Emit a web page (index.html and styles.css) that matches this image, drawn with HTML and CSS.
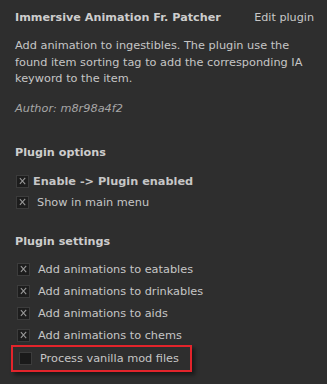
FILE: index.html
```html
<!DOCTYPE html>
<html>
<head>
<meta charset="utf-8">
<link rel="stylesheet" href="styles.css">
</head>
<body>
<div class="panel">
  <div class="header">
    <span class="title">Immersive Animation Fr. Patcher</span>
    <span class="edit">Edit plugin</span>
  </div>
  <p class="desc">Add animation to ingestibles. The plugin use the found item sorting tag to add the corresponding IA keyword to the item.</p>
  <p class="author">Author: m8r98a4f2</p>

  <h2 class="section">Plugin options</h2>
  <div class="opts">
    <div class="row bold"><span class="cb on"></span><span class="lbl">Enable -&gt; Plugin enabled</span></div>
    <div class="row"><span class="cb on"></span><span class="lbl">Show in main menu</span></div>
  </div>

  <h2 class="section s2">Plugin settings</h2>
  <div class="opts settings">
    <div class="row"><span class="cb on"></span><span class="lbl">Add animations to eatables</span></div>
    <div class="row"><span class="cb on"></span><span class="lbl">Add animations to drinkables</span></div>
    <div class="row"><span class="cb on"></span><span class="lbl">Add animations to aids</span></div>
    <div class="row"><span class="cb on"></span><span class="lbl">Add animations to chems</span></div>
    <div class="hl"><div class="row"><span class="cb"></span><span class="lbl">Process vanilla mod files</span></div></div>
  </div>
</div>
</body>
</html>
```
FILE: styles.css
```css
html, body { margin: 0; padding: 0; background: #2e2e2e; }
body { width: 327px; height: 384px; overflow: hidden; font-family: "DejaVu Sans", sans-serif; color: #c6c6c6; font-size: 11.3px; }
.panel { padding: 11px 6px 0 15px; }
.header { display: flex; justify-content: space-between; align-items: baseline; line-height: 14px; }
.title { font-weight: bold; font-size: 11.2px; color: #cdcdcd; }
.edit { font-size: 11.2px; color: #c8c8c8; margin-right: 7px; }
.desc { margin: 13px 0 0; line-height: 16.5px; }
.author { margin: 14px 0 0; line-height: 14px; font-style: italic; color: #a6a6a6; }
.section { margin: 30px 0 0; line-height: 14px; font-size: 11.2px; font-weight: bold; color: #cdcdcd; }
.s2 { margin-top: 22.5px; }
.opts { margin-top: 11px; display: flex; flex-direction: column; }
.opts .row { height: 21px; }
.settings { margin-top: 9px; }
.settings .row { height: 22px; }
.row { display: flex; align-items: center; white-space: nowrap; }
.row.bold { font-weight: bold; font-size: 11.3px; }
.cb { width: 11px; height: 11px; border: 1px solid #3c3c3c; background: #1d1d1d; margin-left: 1px; position: relative; flex: none; }
.cb.on::before, .cb.on::after { content: ""; position: absolute; left: 5px; top: 1.5px; width: 1.4px; height: 8px; background: #9c9c9c; }
.cb.on::before { transform: rotate(42deg); }
.cb.on::after { transform: rotate(-42deg); }
.lbl { margin-left: 8px; }
.bold .lbl { margin-left: 4px; }
.settings .cb { margin-left: 2px; }
.hl { margin: -1px 0 0 -4px; width: 173px; height: 23px; border: 2px solid #e3242b; padding-left: 4px; box-shadow: 3px 3px 4px rgba(0,0,0,0.45); }
.hl .row { height: 22px; }
.hl .cb { margin-left: 2px; background: #1a1a1a; }
```
